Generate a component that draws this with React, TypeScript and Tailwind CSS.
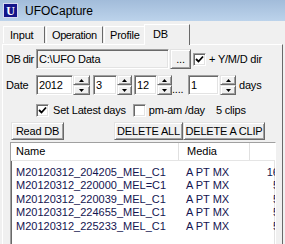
import React from 'react';

/* klassiska Windows-kanter */
const sunken =
  'border border-t-[#a0a0a0] border-l-[#a0a0a0] border-r-white border-b-white shadow-[inset_1px_1px_0_#696969,inset_-1px_-1px_0_#e3e3e3]';
const raised =
  'border border-t-[#e3e3e3] border-l-[#e3e3e3] border-r-[#696969] border-b-[#696969] shadow-[inset_1px_1px_0_#ffffff,inset_-1px_-1px_0_#a0a0a0] bg-[#f0f0f0]';

type Clip = { name: string; media: string; size: string };

const CLIPS: Clip[] = [
  { name: 'M20120312_204205_MEL_C1', media: 'A PT MX', size: '16' },
  { name: 'M20120312_220000_MEL=C1', media: 'A PT MX', size: '5' },
  { name: 'M20120312_220039_MEL_C1', media: 'A PT MX', size: '5' },
  { name: 'M20120312_224655_MEL_C1', media: 'A PT MX', size: '5' },
  { name: 'M20120312_225233_MEL_C1', media: 'A PT MX', size: '5' },
];

function Spinner({ w = 'w-[16px]' }: { w?: string }) {
  return (
    <div className={`flex flex-col h-[20px] shrink-0 ${w}`}>
      <div className={`${raised} h-[10px] flex items-center justify-center`}>
        <svg width="5" height="3" viewBox="0 0 5 3"><path d="M2.5 0 L5 3 L0 3 Z" fill="#000" /></svg>
      </div>
      <div className={`${raised} h-[10px] flex items-center justify-center`}>
        <svg width="5" height="3" viewBox="0 0 5 3"><path d="M0 0 L5 0 L2.5 3 Z" fill="#000" /></svg>
      </div>
    </div>
  );
}

function Check({ on }: { on: boolean }) {
  return (
    <div className={`${sunken} w-[13px] h-[13px] bg-white flex items-center justify-center shrink-0`}>
      {on && (
        <svg width="9" height="9" viewBox="0 0 9 9">
          <path d="M1 4 L3.5 6.5 L8 1.5" stroke="#000" strokeWidth="1.8" fill="none" />
        </svg>
      )}
    </div>
  );
}

export default function App() {
  return (
    <div
      className="w-[285px] h-[244px] overflow-hidden bg-[#f0f0f0] text-[11px] text-black whitespace-nowrap tracking-[-0.2px]"
      style={{ fontFamily: '"Liberation Sans", Arial, sans-serif' }}
    >
      {/* Titelrad */}
      <div className="h-[21px] bg-gradient-to-b from-[#a2bcda] to-[#bcd3eb] flex items-center pl-[3px]">
        <div className="w-[15px] h-[15px] bg-[#14148a] border border-[#d8d8f0] flex items-center justify-center">
          <span className="text-white font-bold text-[12px] leading-none" style={{ fontFamily: '"Liberation Serif", serif' }}>U</span>
        </div>
        <span className="ml-[7px] text-[12px] tracking-normal">UFOCapture</span>
      </div>

      {/* Flikar */}
      <div className="h-[23px] flex items-end pl-[3px] relative z-10">
        <div className="h-[17px] w-[42px] border-t border-l border-white border-r border-r-[#696969] flex items-center pl-[6px] mb-[1px]">Input</div>
        <div className="h-[17px] w-[57px] ml-[1px] border-t border-l border-white border-r border-r-[#696969] flex items-center pl-[5px] mb-[1px] tracking-[-0.4px]">Operation</div>
        <div className="h-[17px] w-[40px] ml-[1px] border-t border-l border-white flex items-center pl-[5px] mb-[1px]">Profile</div>
        <div className="h-[21px] w-[46px] -mb-[1px] bg-[#f0f0f0] border-t border-l border-white border-r border-r-[#696969] flex items-center pl-[8px] pb-[1px]">DB</div>
      </div>

      {/* Panel */}
      <div className="ml-[2px] w-[281px] h-[200px] border-t border-l border-white border-r border-r-[#696969] pl-[3px]">
        {/* DB dir */}
        <div className="mt-[4px] h-[20px] flex items-center">
          <span className="w-[30px] shrink-0 tracking-[-0.5px]">DB dir</span>
          <div className={`${sunken} w-[133px] h-[20px] shrink-0 bg-[#f4f4f4] flex items-center pl-[2px]`}>C:\UFO Data</div>
          <div className={`${raised} ml-[1px] w-[21px] h-[20px] shrink-0 flex items-end justify-center pb-[3px] leading-none`}>...</div>
          <div className="ml-[2px] shrink-0"><Check on /></div>
          <span className="ml-[3px] shrink-0">+ Y/M/D dir</span>
        </div>

        {/* Datum */}
        <div className="mt-[6px] h-[20px] flex items-center">
          <span className="w-[30px] shrink-0">Date</span>
          <div className={`${sunken} w-[37px] h-[20px] shrink-0 bg-white flex items-center pl-[2px]`}>2012</div>
          <Spinner w="w-[17px]" />
          <div className={`${sunken} ml-[3px] w-[24px] h-[20px] shrink-0 bg-white flex items-center pl-[2px]`}>3</div>
          <Spinner w="w-[15px]" />
          <div className={`${sunken} ml-[2px] w-[23px] h-[20px] shrink-0 bg-white flex items-center pl-[2px]`}>12</div>
          <Spinner w="w-[15px]" />
          <span className="w-[16px] shrink-0 self-end leading-[12px] text-[11px]">....</span>
          <div className={`${sunken} w-[31px] h-[20px] shrink-0 bg-white flex items-center pl-[2px]`}>1</div>
          <div className="ml-[1px] shrink-0"><Spinner w="w-[16px]" /></div>
          <span className="ml-[3px] shrink-0">days</span>
        </div>

        {/* Kryssrutor */}
        <div className="mt-[9px] h-[13px] flex items-center">
          <div className="ml-[30px] shrink-0"><Check on /></div>
          <span className="ml-[4px] shrink-0">Set Latest days</span>
          <div className="ml-[7px] shrink-0"><Check on={false} /></div>
          <span className="ml-[3px] shrink-0">pm-am /day</span>
          <span className="ml-[11px] shrink-0">5 clips</span>
        </div>

        {/* Knappar */}
        <div className="mt-[5px] h-[18px] flex">
          <div className={`${raised} ml-[5px] w-[53px] h-[18px] shrink-0 flex items-center justify-center`}>Read DB</div>
          <div className={`${raised} ml-[50px] w-[69px] h-[18px] shrink-0 flex items-center justify-center`}>DELETE ALL</div>
          <div className={`${raised} w-[82px] h-[18px] shrink-0 flex items-center justify-center`}>DELETE A CLIP</div>
        </div>

        {/* Lista */}
        <div className={`${sunken} mt-[2px] ml-[4px] w-[266px] h-[110px] bg-white overflow-hidden tracking-normal`}>
          <div className="flex h-[18px] border-b border-[#e5e5e5] bg-white w-[300px]">
            <div className="w-[168px] shrink-0 pl-[5px] flex items-center border-r border-[#e0e0e0]">Name</div>
            <div className="w-[71px] shrink-0 pl-[8px] flex items-center border-r border-[#e0e0e0]">Media</div>
            <div className="w-[40px] shrink-0" />
          </div>
          <div className="pt-[4px] text-[#141450] w-[300px]">
            {CLIPS.map((c) => (
              <div key={c.name} className="flex h-[13.6px] items-center">
                <div className="w-[168px] shrink-0 pl-[5px]">{c.name}</div>
                <div className="w-[71px] shrink-0 pl-[7px]">{c.media}</div>
                <div className="w-[29px] shrink-0 text-right">{c.size}</div>
              </div>
            ))}
          </div>
        </div>
      </div>
    </div>
  );
}
